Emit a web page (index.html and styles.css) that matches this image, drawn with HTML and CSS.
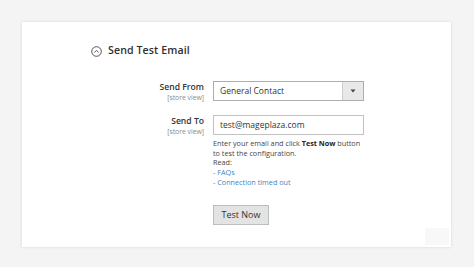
FILE: index.html
```html
<!DOCTYPE html>
<html>
<head>
<meta charset="utf-8">
<link rel="stylesheet" href="styles.css">
</head>
<body>
<div class="card">
  <div class="heading">
    <svg class="toggle" width="11" height="11" viewBox="0 0 11 11"><circle cx="5.5" cy="5.5" r="4.8" fill="none" stroke="#444" stroke-width="0.9"/><path d="M3.4 6.5 L5.5 4.4 L7.6 6.5" fill="none" stroke="#444" stroke-width="0.9"/></svg>
    <span class="title">Send Test Email</span>
  </div>
  <div class="row row-from">
    <div class="label"><div class="lbl">Send From</div><div class="scope">[store view]</div></div>
    <div class="control">
      <div class="select"><span class="value">General Contact</span><span class="arrow"><svg width="6" height="4" viewBox="0 0 6 4"><path d="M0.5 0.5 L5.5 0.5 L3 3.5 Z" fill="#444"/></svg></span></div>
    </div>
  </div>
  <div class="row row-to">
    <div class="label"><div class="lbl">Send To</div><div class="scope">[store view]</div></div>
    <div class="control">
      <div class="input">test@mageplaza.com</div>
      <div class="note">
        <div>Enter your email and click <b>Test Now</b> button</div>
        <div>to test the configuration.</div>
        <div>Read:</div>
        <div><a>- FAQs</a></div>
        <div><a>- Connection timed out</a></div>
      </div>
      <div class="btn">Test Now</div>
    </div>
  </div>
  <div class="corner"></div>
</div>
</body>
</html>
```
FILE: styles.css
```css
html, body { margin: 0; padding: 0; }
body {
  background: #f4f4f4;
  width: 474px;
  height: 267px;
  padding: 22px 0 0 22px;
  box-sizing: border-box;
  font-family: "Open Sans", "Liberation Sans", sans-serif;
  color: #303030;
}
.card {
  position: relative;
  width: 429px;
  height: 225px;
  background: #fff;
  box-shadow: 0 0 3px rgba(0,0,0,0.12);
  box-sizing: border-box;
  padding: 20px 0 0 69px;
}
.heading {
  display: flex;
  align-items: center;
  gap: 6px;
  height: 16px;
}
.toggle { display: block; margin-top: 2px; }
.title {
  font-size: 10.6px;
  font-weight: 600;
  color: #2f2f2f;
  letter-spacing: 0.1px;
}
.row {
  display: flex;
  gap: 9px;
}
.row-from { margin-top: 23px; }
.row-to { margin-top: 13px; }
.label {
  width: 113px;
  text-align: right;
  padding-top: 1px;
}
.lbl {
  font-size: 8.6px;
  font-weight: 600;
  color: #333;
  line-height: 11px;
}
.scope {
  font-size: 6.8px;
  color: #8a8a8a;
  line-height: 9px;
}
.control { width: 151px; }
.select {
  height: 20px;
  border: 1px solid #adadad;
  box-sizing: border-box;
  display: flex;
  align-items: stretch;
  font-size: 8.5px;
  color: #333;
}
.select .value { flex: 1; padding-left: 6px; line-height: 18px; }
.select .arrow {
  width: 20px;
  background: #e8e8e8;
  border-left: 1px solid #cfcfcf;
  display: flex;
  align-items: center;
  justify-content: center;
}
.input {
  height: 20px;
  border: 1px solid #c2c2c2;
  box-sizing: border-box;
  font-size: 8.5px;
  color: #333;
  padding-left: 6px;
  line-height: 18px;
}
.note {
  margin-top: 4px;
  font-size: 7.25px;
  line-height: 9.7px;
  color: #444;
}
.note b { font-weight: 700; color: #222; }
.note a { color: #4a7fc0; }
.btn {
  margin-top: 17px;
  width: 56px;
  height: 20px;
  box-sizing: border-box;
  border: 1px solid #bdbdbd;
  background: #e3e3e3;
  font-size: 9px;
  color: #333;
  text-align: center;
  line-height: 18px;
}
.corner {
  position: absolute;
  right: 2px;
  bottom: 2px;
  width: 24px;
  height: 17px;
  background: #f8f8f8;
}
```
